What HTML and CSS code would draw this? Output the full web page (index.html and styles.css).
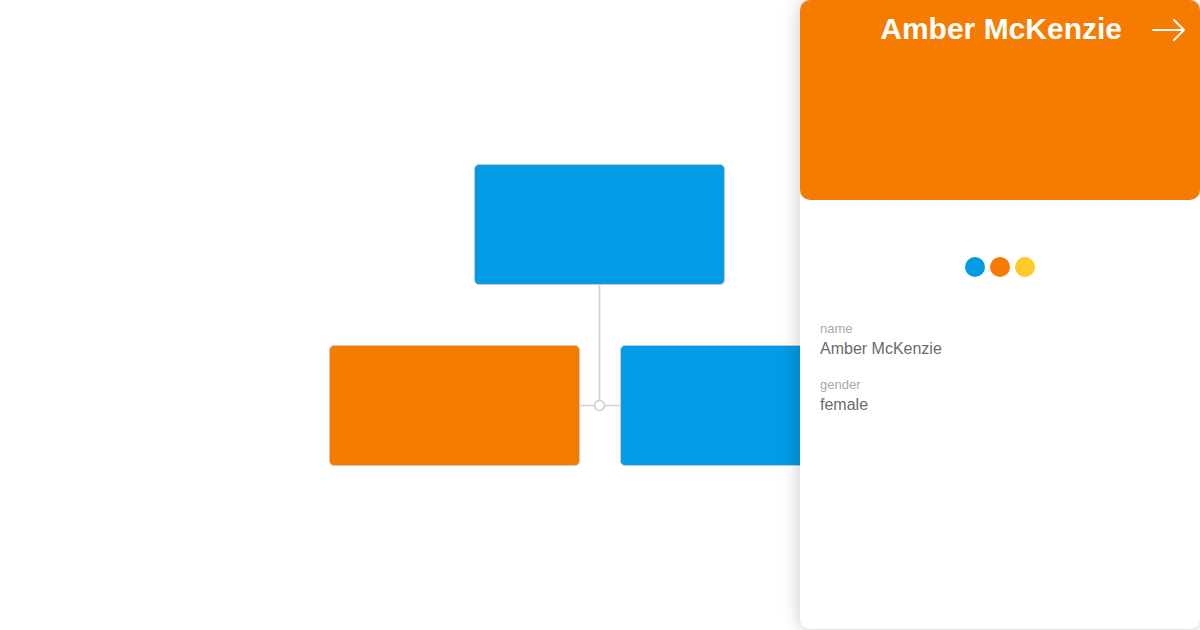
FILE: index.html
```html
<!DOCTYPE html>
<html>
<head>
<meta charset="utf-8">
<link rel="stylesheet" href="styles.css">
</head>
<body>
<div class="canvas">
  <svg class="links" width="1200" height="630" viewBox="0 0 1200 630">
    <path d="M599.5 285 V400" />
    <path d="M580 405.5 H594.5 M604.5 405.5 H620" />
    <circle cx="599.5" cy="405.5" r="5" />
  </svg>
  <div class="node node-blue n-top"></div>
  <div class="node node-orange n-left"></div>
  <div class="node node-blue n-right"></div>

  <aside class="panel">
    <header class="panel-head">
      <h1 class="panel-title">Amber McKenzie</h1>
      <svg class="arrow" width="34" height="24" viewBox="0 0 34 24">
        <path d="M1 12 H32 M22 2 L32 12 L22 22" />
      </svg>
    </header>
    <div class="dots">
      <span class="dot dot-blue"></span>
      <span class="dot dot-orange"></span>
      <span class="dot dot-yellow"></span>
    </div>
    <div class="fields">
      <div class="field">
        <div class="label">name</div>
        <div class="value">Amber McKenzie</div>
      </div>
      <div class="field">
        <div class="label">gender</div>
        <div class="value">female</div>
      </div>
    </div>
  </aside>
</div>
</body>
</html>
```

FILE: styles.css
```css
* { box-sizing: border-box; }
html, body {
  margin: 0;
  padding: 0;
  background: #ffffff;
  font-family: "Liberation Sans", Arial, sans-serif;
}
.canvas {
  position: relative;
  width: 1200px;
  height: 630px;
  overflow: hidden;
}
.links {
  position: absolute;
  left: 0;
  top: 0;
}
.links path, .links circle {
  fill: none;
  stroke: #cfcfcf;
  stroke-width: 1.6;
}
.links circle { fill: #fff; }
.node {
  position: absolute;
  width: 251px;
  height: 121px;
  border: 1px solid #c9c9c9;
  border-radius: 5px;
}
.node-blue { background: #039be5; }
.node-orange { background: #f57c00; }
.n-top { left: 474px; top: 164px; }
.n-left { left: 329px; top: 345px; }
.n-right { left: 620px; top: 345px; }

.panel {
  position: absolute;
  left: 800px;
  top: 0;
  width: 400px;
  height: 629px;
  background: #fff;
  border-radius: 10px;
  box-shadow: 0 0 18px rgba(0, 0, 0, 0.22);
  display: flex;
  flex-direction: column;
}
.panel-head {
  height: 200px;
  background: #f57c00;
  border-radius: 10px;
  display: flex;
  justify-content: flex-end;
  align-items: flex-start;
  padding: 11px 14px 0 0;
  gap: 30px;
}
.panel-title {
  margin: 0;
  font-size: 30px;
  line-height: 36px;
  font-weight: bold;
  color: #fff;
}
.arrow {
  margin-top: 7px;
}
.arrow path {
  fill: none;
  stroke: #fff;
  stroke-width: 2;
  stroke-linecap: round;
  stroke-linejoin: round;
}
.dots {
  display: flex;
  justify-content: center;
  gap: 5px;
  margin-top: 57px;
}
.dot {
  width: 20px;
  height: 20px;
  border-radius: 50%;
}
.dot-blue { background: #039be5; }
.dot-orange { background: #f57c00; }
.dot-yellow { background: #ffca28; }
.fields {
  margin-top: 44px;
  padding-left: 20px;
  display: flex;
  flex-direction: column;
  gap: 18px;
}
.label {
  font-size: 13px;
  line-height: 16px;
  margin-bottom: 2px;
  color: #aaaaaa;
}
.value {
  font-size: 16px;
  line-height: 20px;
  color: #6b6b6b;
}
```
